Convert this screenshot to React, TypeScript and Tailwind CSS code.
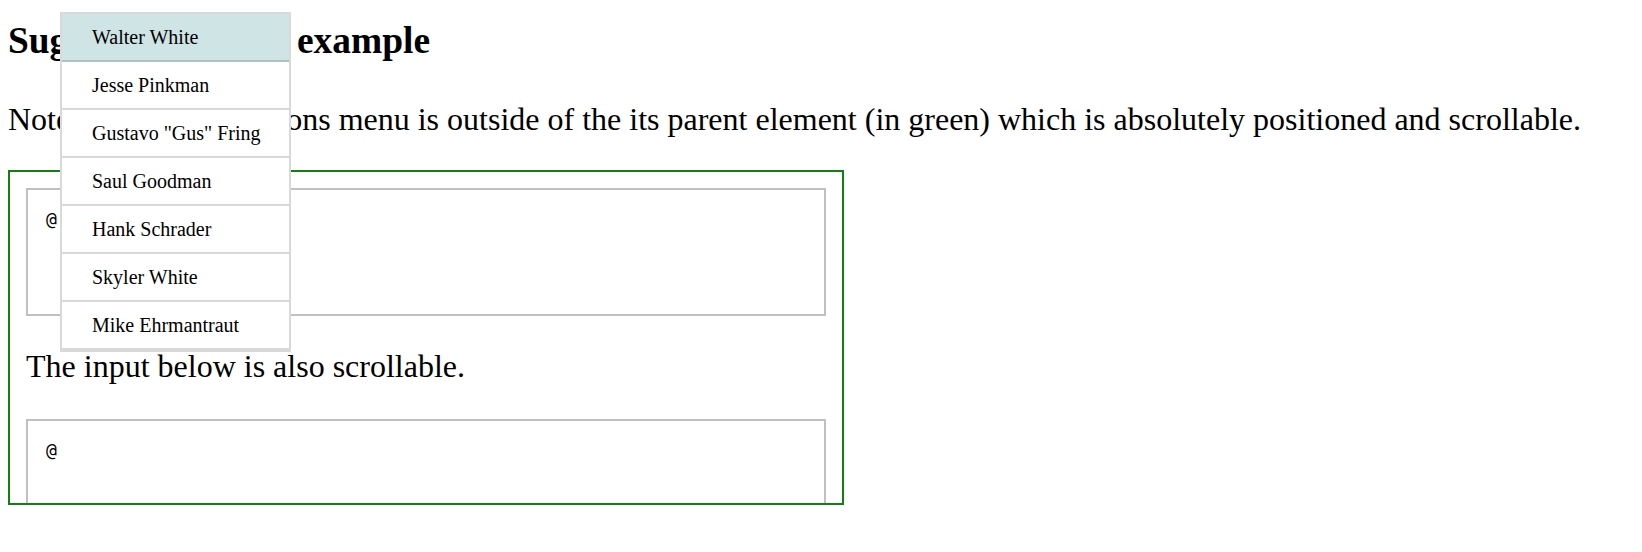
import React from "react";

const people = [
  "Walter White",
  "Jesse Pinkman",
  'Gustavo "Gus" Fring',
  "Saul Goodman",
  "Hank Schrader",
  "Skyler White",
  "Mike Ehrmantraut",
];

export default function App() {
  return (
    <div className="relative flex flex-col w-[1642px] h-[552px] bg-white text-black font-['Liberation_Serif','Times_New_Roman',serif] pl-[8px] pt-[20px]">
      <h3 className="text-[37.44px] leading-[42px] font-bold whitespace-nowrap">
        Suggestion portal example
      </h3>
      <p className="mt-[39px] text-[32px] leading-[36px] whitespace-nowrap">
        Note that the suggestions menu is outside of the its parent element (in green) which is absolutely positioned and scrollable.
      </p>
      <div className="mt-[33px] w-[836px] h-[335px] shrink-0 border-2 border-[#118011] p-[16px] overflow-hidden">
        <div className="w-[800px] h-[128px] border-2 border-[#c0c0c0] px-[18px] pt-[19px] font-['DejaVu_Sans_Mono',monospace] text-[18px] leading-[20px]">
          @
        </div>
        <p className="mt-[32px] mb-[35px] text-[32px] leading-[36px] whitespace-nowrap">
          The input below is also scrollable.
        </p>
        <div className="w-[800px] h-[128px] border-2 border-[#c0c0c0] px-[18px] pt-[19px] font-['DejaVu_Sans_Mono',monospace] text-[18px] leading-[20px]">
          @
        </div>
      </div>

      <ul className="absolute left-[60px] top-[12px] w-[231px] bg-white border-2 border-[#d9d9d9] text-[20px]">
        {people.map((name, i) => (
          <li
            key={name}
            className={
              i === 0
                ? "h-[48px] flex items-center pl-[30px] border-b-2 border-[#afc2c3] bg-[#cee4e5] whitespace-nowrap"
                : "h-[48px] flex items-center pl-[30px] border-b-2 border-[#d9d9d9] whitespace-nowrap"
            }
          >
            {name}
          </li>
        ))}
      </ul>
    </div>
  );
}
